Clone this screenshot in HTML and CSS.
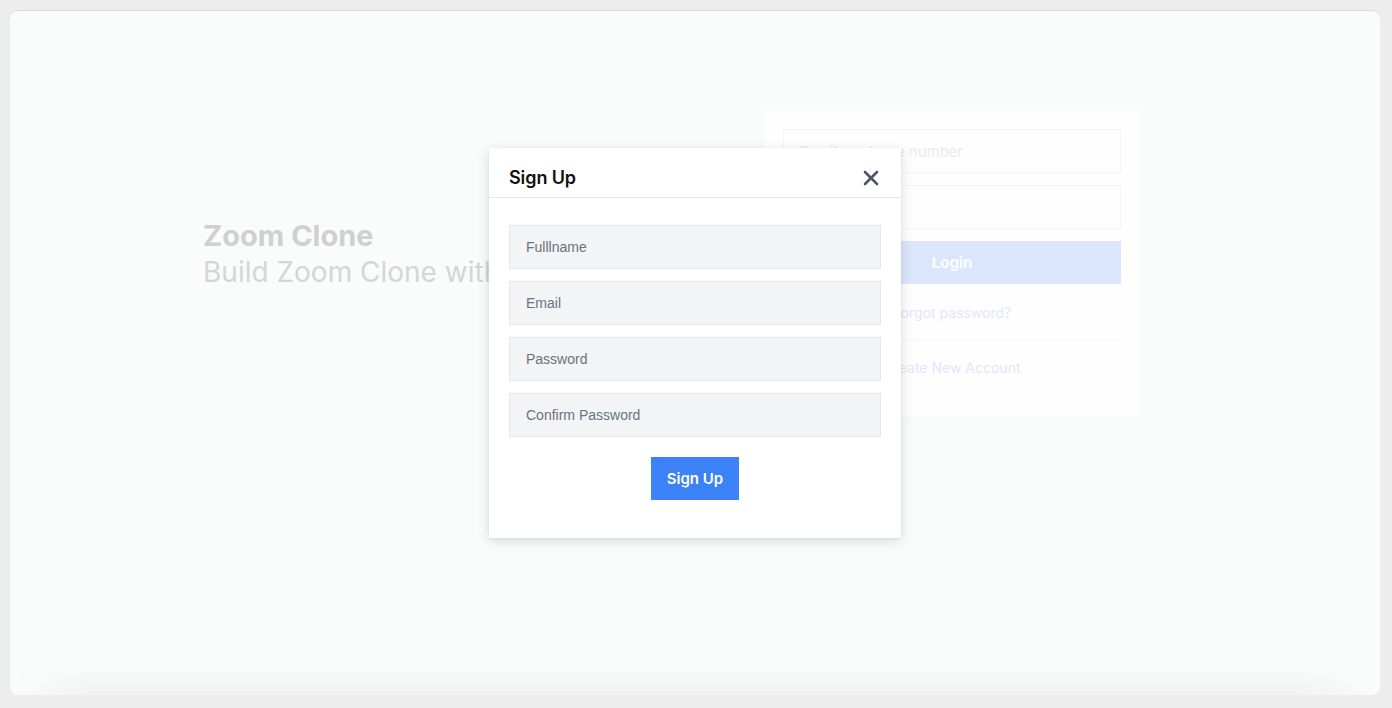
FILE: index.html
```html
<!DOCTYPE html>
<html>
<head>
<meta charset="utf-8">
<meta name="viewport" content="width=device-width, initial-scale=1">
<title>Zoom Clone - Sign Up</title>
<link rel="stylesheet" href="styles.css">
</head>
<body>

<div class="frame">

  <div class="main">
    <div class="intro">
      <h1>Zoom Clone</h1>
      <p>Build Zoom Clone with React</p>
    </div>

    <div class="card">
      <input class="field" type="text" placeholder="Email or phone number">
      <input class="field" type="password" placeholder="">
      <button class="btn-login">Login</button>
      <p class="link">Forgot password?</p>
      <p class="link link-create">Create New Account</p>
    </div>
  </div>

  <div class="fade"></div>

  <div class="modal">
    <div class="modal-head">
      <strong>Sign Up</strong>
      <a href="#" class="close">
        <svg width="16" height="16" viewBox="0 0 16 16"><path d="M2 2L14 14M14 2L2 14" stroke="#4b5563" stroke-width="2.6" stroke-linecap="round"/></svg>
      </a>
    </div>
    <div class="modal-body">
      <input class="inp" type="text" placeholder="Fulllname">
      <input class="inp" type="email" placeholder="Email">
      <input class="inp" type="password" placeholder="Password">
      <input class="inp" type="password" placeholder="Confirm Password">
      <button class="btn-sign">Sign Up</button>
    </div>
  </div>

</div>

</body>
</html>
```

FILE: styles.css
```css
html, body { margin:0; padding:0; }
body { background:#ededed; font-family:Inter, "Liberation Sans", sans-serif; }

.frame { position:relative; margin:10px 0 0 10px; width:1370px; height:685px; background:#fafbfb; border-radius:8px; border-top:1px solid #dadada; box-sizing:border-box; overflow:hidden; }
.fade { position:absolute; left:0; right:0; bottom:0; height:32px; background:linear-gradient(to bottom, rgba(0,0,0,0), rgba(0,0,0,0.035)); -webkit-mask-image:linear-gradient(to right, transparent, #000 6%, #000 94%, transparent); mask-image:linear-gradient(to right, transparent, #000 6%, #000 94%, transparent); }

.main { display:flex; padding:99px 0 0 193px; }
.intro { width:561px; margin-top:107px; white-space:nowrap; }
.intro h1 { margin:0; font-size:29px; line-height:37px; font-weight:700; color:#d0d0d0; }
.intro p { margin:0; font-size:28px; line-height:37px; font-weight:400; color:#d6d6d6; }

.card { width:376px; height:306px; box-sizing:border-box; padding:19px; background:#fefefe; box-shadow:0 1px 4px rgba(0,0,0,0.02); display:flex; flex-direction:column; }
.card .field { height:45px; margin:0 0 12px 0; border:1px solid #f4f4f4; background:#fefefe; padding:0 15px; font-family:Inter, sans-serif; font-size:15px; outline:none; box-sizing:border-box; }
.card .field::placeholder { color:#ebebeb; }
.btn-login { height:44px; border:0; background:#dbe6fd; color:#fbfcff; font-family:Inter, sans-serif; font-weight:700; font-size:15px; }
.link { margin:0; text-align:center; font-size:14px; color:#dfe7fb; height:55px; line-height:57px; }
.link-create { border-top:1px solid #f5f5f5; height:58px; line-height:56px; }

.modal { position:absolute; left:479px; top:137px; width:412px; background:#fff; box-shadow:0 3px 12px rgba(0,0,0,0.13), 0 1px 3px rgba(0,0,0,0.06); }
.modal-head { height:50px; box-sizing:border-box; border-bottom:1px solid #e6e6e6; display:flex; align-items:center; justify-content:space-between; padding:10px 22px 0 20px; }
.modal-head strong { font-size:18px; font-weight:600; color:#111; letter-spacing:-0.1px; }
.close { display:flex; }
.modal-body { padding:27px 20px 38px 20px; display:flex; flex-direction:column; }
.inp { height:44px; box-sizing:border-box; margin:0 0 12px 0; padding:0 16px; background:#f3f4f6; border:1px solid #e5e7eb; font-family:"Liberation Sans", Arial, sans-serif; font-size:14px; outline:none; }
.inp::placeholder { color:#6b7280; }
.btn-sign { align-self:center; margin-top:8px; height:43px; padding:0 16px; border:0; background:#3b82f6; color:#fff; font-family:Inter, sans-serif; font-weight:600; font-size:15px; }
```
